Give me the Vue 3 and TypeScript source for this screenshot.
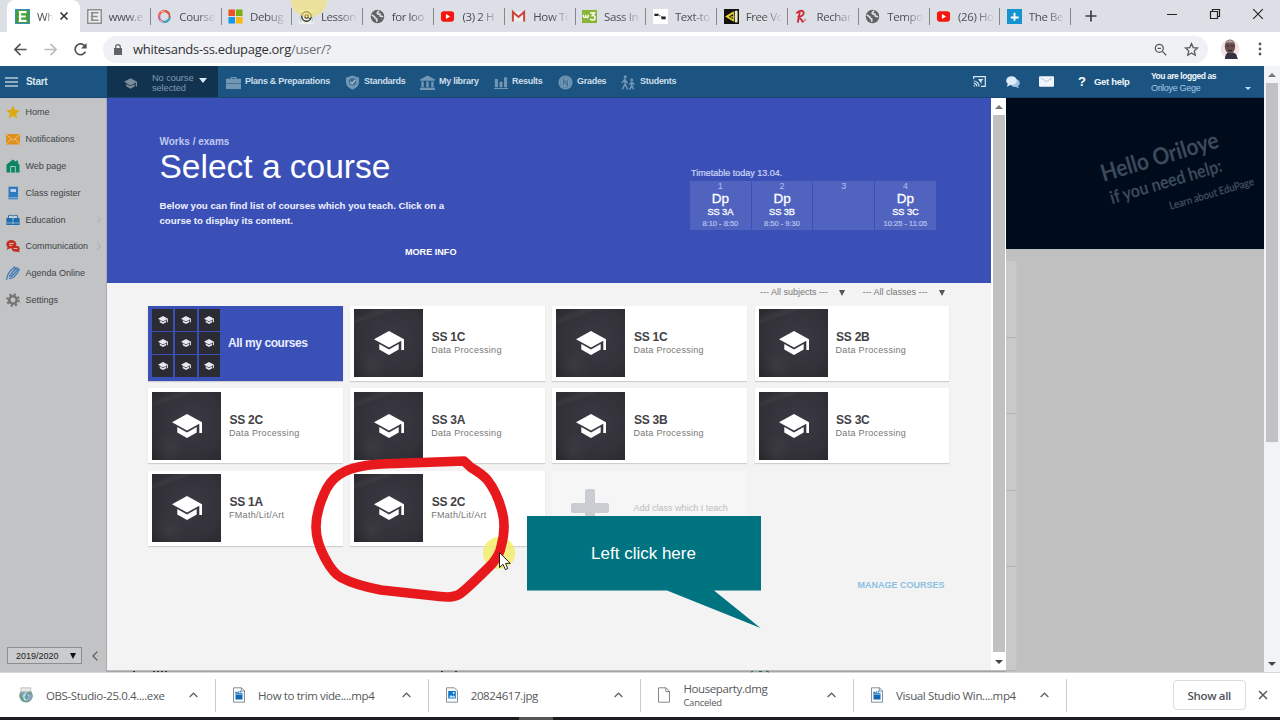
<script setup lang="ts">
interface Tab { icon: string; title: string; active?: boolean }
interface NavItem { icon: string; label: string; width: number; size: number }
interface SideItem { icon: string; label: string; more?: boolean }
interface Course { name: string; subject: string }
interface Lesson { nr: number; subject?: string; cls?: string; time?: string }
interface Download { icon: string; name: string; note?: string }

const tabs: Tab[] = [
  { icon: 'edu', title: 'Wh', active: true },
  { icon: 'edugrey', title: 'www.e' },
  { icon: 'ring', title: 'Course' },
  { icon: 'ms', title: 'Debug' },
  { icon: 'at', title: 'Lesson' },
  { icon: 'globe', title: 'for loo' },
  { icon: 'yt', title: '(3) 2 H' },
  { icon: 'gmail', title: 'How To' },
  { icon: 'w3', title: 'Sass In' },
  { icon: 'tts', title: 'Text-to' },
  { icon: 'free', title: 'Free Vo' },
  { icon: 'r', title: 'Rechar' },
  { icon: 'globe', title: 'Tempo' },
  { icon: 'yt', title: '(26) Ho' },
  { icon: 'plus', title: 'The Be' },
]

const nav: NavItem[] = [
  { icon: 'case', label: 'Plans & Preparations', width: 119, size: 15 },
  { icon: 'shield', label: 'Standards', width: 75, size: 15 },
  { icon: 'bank', label: 'My library', width: 74, size: 15 },
  { icon: 'bars', label: 'Results', width: 64, size: 14 },
  { icon: 'grade', label: 'Grades', width: 62, size: 15 },
  { icon: 'walk', label: 'Students', width: 70, size: 16 },
]

const side: SideItem[] = [
  { icon: 'star', label: 'Home' },
  { icon: 'envelope', label: 'Notifications' },
  { icon: 'house', label: 'Web page' },
  { icon: 'book', label: 'Class register' },
  { icon: 'edubook', label: 'Education', more: true },
  { icon: 'chat', label: 'Communication', more: true },
  { icon: 'pens', label: 'Agenda Online' },
  { icon: 'gear', label: 'Settings' },
]

const courses: Course[] = [
  { name: 'SS 1C', subject: 'Data Processing' },
  { name: 'SS 1C', subject: 'Data Processing' },
  { name: 'SS 2B', subject: 'Data Processing' },
  { name: 'SS 2C', subject: 'Data Processing' },
  { name: 'SS 3A', subject: 'Data Processing' },
  { name: 'SS 3B', subject: 'Data Processing' },
  { name: 'SS 3C', subject: 'Data Processing' },
  { name: 'SS 1A', subject: 'FMath/Lit/Art' },
  { name: 'SS 2C', subject: 'FMath/Lit/Art' },
]

const lessons: Lesson[] = [
  { nr: 1, subject: 'Dp', cls: 'SS 3A', time: '8:10 - 8:50' },
  { nr: 2, subject: 'Dp', cls: 'SS 3B', time: '8:50 - 9:30' },
  { nr: 3 },
  { nr: 4, subject: 'Dp', cls: 'SS 3C', time: '10:25 - 11:05' },
]

const downloads: Download[] = [
  { icon: 'disc', name: 'OBS-Studio-25.0.4....exe' },
  { icon: 'video', name: 'How to trim vide....mp4' },
  { icon: 'image', name: '20824617.jpg' },
  { icon: 'file', name: 'Houseparty.dmg', note: 'Canceled' },
  { icon: 'video', name: 'Visual Studio Win....mp4' },
]
</script>

<template>
  <div class="screen">
    <svg class="defs" width="0" height="0" aria-hidden="true">
      <symbol id="i-edu" viewBox="0 0 16 16"><rect width="16" height="16" fill="#3d8fb5" /><rect x="1.2" y="1.2" width="13.6" height="13.6" fill="#43a02f" /><path d="M4 3.3h8.3M4 8h7.6M4 12.6h8.3M5.4 3v10" stroke="#fff" stroke-width="2.3" fill="none" /></symbol>
      <symbol id="i-edugrey" viewBox="0 0 16 16"><rect x=".8" y=".8" width="14.4" height="14.4" fill="#eee" stroke="#8f9092" stroke-width="1.6" /><path d="M4 4h8.3M4 8h7.4M4 12h8.3M5.4 3.5v9" stroke="#8b8c8e" stroke-width="1.8" fill="none" /></symbol>
      <symbol id="i-ring" viewBox="0 0 16 16"><g fill="none" stroke-width="2.6"><path d="M8 2.2A5.8 5.8 0 0 1 13.6 9" stroke="#d9574c" /><path d="M13.6 9A5.8 5.8 0 0 1 6 13.4" stroke="#41a5b8" /><path d="M6 13.4A5.8 5.8 0 0 1 2.4 6.5" stroke="#c9619a" /><path d="M2.4 6.5A5.8 5.8 0 0 1 8 2.2" stroke="#ec6a4c" /></g><path d="M4 2l3 1M14 5l1 3M3 12l3 2" stroke="#fff" stroke-width=".7" /></symbol>
      <symbol id="i-ms" viewBox="0 0 16 16"><path d="M.5.5h7v7h-7z" fill="#f25022" /><path d="M8.5.5h7v7h-7z" fill="#7aae12" /><path d="M.5 8.5h7v7h-7z" fill="#1697e8" /><path d="M8.5 8.5h7v7h-7z" fill="#fcb50b" /></symbol>
      <symbol id="i-at" viewBox="0 0 16 16"><rect y="1" width="16" height="15" fill="#f1f4ee" opacity=".8" /><circle cx="8" cy="8" r="5" fill="none" stroke="#3a3320" stroke-width="1.5" /><circle cx="8" cy="8" r="1.8" fill="none" stroke="#3a3320" stroke-width="1.2" /><path d="M10 5.5v4q1 1.3 2.2.3" fill="none" stroke="#3a3320" /><path d="M2 3q-2 5 0 11M14 3q2 5 0 11" stroke="#8fcbd8" fill="none" /></symbol>
      <symbol id="i-globe" viewBox="0 0 16 16"><circle cx="8" cy="8" r="7.2" fill="#5f6368" /><path d="M1.8 6.2L5 8.4l.5 1.4 1.7.8v3M9.600 1.800L7.600 4.200l1.200 1.300h1.800l.4 2 3 .8" stroke="#dfe1e6" stroke-width="1.700" fill="none" /></symbol>
      <symbol id="i-yt" viewBox="0 0 16 16"><rect x="1" y="2.5" width="14" height="11" rx="3" fill="#f5170f" /><path d="M6.3 5.4v5.2L10.800 8z" fill="#fff" /></symbol>
      <symbol id="i-gmail" viewBox="0 0 16 16"><path d="M2.500 3h11v10h-11z" fill="#eceef0" /><path d="M2 13.300V3.200l6 5.200 6-5.200v10.100" fill="none" stroke="#cf4036" stroke-width="2.100" /></symbol>
      <symbol id="i-w3" viewBox="0 0 16 16"><rect y="1" width="16" height="14" fill="#8bb43a" /><path d="M1.500 6v1.500q0 1.500 1.300 1.500T4 7.500V6v1.500Q4 9 5.400 9t1.400-1.500V6M8.800 4.200h4.500l-2.200 2.700q2.900-.2 2.900 2.400t-2.800 2.500q-2 0-2.600-1.400" fill="none" stroke="#fff" stroke-width="1.500" /></symbol>
      <symbol id="i-tts" viewBox="0 0 16 16"><rect width="16" height="16" fill="#fff" /><path d="M1.500 5h4.200v2.500H1.500zM9 8h4.500v2.800H9z" fill="#222" /><path d="M5 5.500l5 3.500" stroke="#444" stroke-width="1.200" stroke-dasharray="1.2 1" /></symbol>
      <symbol id="i-free" viewBox="0 0 16 16"><rect width="16" height="16" fill="#111" /><path d="M1 8l9.500-5.500v11z" fill="#e5d32d" /><path d="M5 8.200l4.500-3v5.500z" fill="#111" /><path d="M7 8.400h4" stroke="#e5d32d" stroke-width="1.300" /><path d="M11.500 2.500q1-1 1.500-1t1.500 1v11q-1 1-1.500 1t-1.500-1z" fill="#eceac8" /></symbol>
      <symbol id="i-r" viewBox="0 0 16 16"><path d="M4 14.500L6.200 3.200M2.500 4.600Q6 1 9.200 2.200q2.300 2-.1 4.600Q7.800 8 5.200 8.300L10 14.300" fill="none" stroke="#cb2c3a" stroke-width="2" /><circle cx="11.600" cy="11.700" r="1.100" fill="none" stroke="#b88" /></symbol>
      <symbol id="i-plus" viewBox="0 0 16 16"><rect width="16" height="16" fill="#1593cf" /><path d="M4 9h8.500M8 4v8.500" stroke="#fff" stroke-width="2" /></symbol>

      <symbol id="i-cap" viewBox="0 0 30 24"><path d="M15 0L0 8.200l15 8.300 12.300-6.800V19H30V8.200zM5.300 13v5.400L15 24l9.700-5.600V13L15 18.500z" fill="currentColor" /></symbol>
      <symbol id="i-case" viewBox="0 0 16 16"><path d="M5 4V2h6v2h5v5H0V4zM6.500 4h3v-.8h-3zM0 9.700h16V15H0z" fill="currentColor" fill-rule="evenodd" /></symbol>
      <symbol id="i-shield" viewBox="0 0 16 16"><path d="M8 .5l7 2.300V8q-.6 5-7 7.800Q1.600 13 1 8V2.800z" fill="currentColor" /><circle cx="8" cy="7.300" r="4" fill="#3f6f97" /><path d="M5.500 7.300l2 2 3.500-4" fill="none" stroke="#a9bed1" stroke-width="1.400" /></symbol>
      <symbol id="i-bank" viewBox="0 0 16 16"><path d="M8 .5l8 4.200V6H0V4.700zM1.500 7h2.500v6H1.500zM6.700 7h2.600v6H6.700zM12 7h2.500v6H12zM0 13.700h16V16H0z" fill="currentColor" /></symbol>
      <symbol id="i-bars" viewBox="0 0 16 16"><path d="M1 4h3.500v9.500H1zM6.300 7h3.400v6.500H6.300zM11.500 2H15v11.500h-3.500zM0 14.300h16v1.200H0z" fill="currentColor" /></symbol>
      <symbol id="i-grade" viewBox="0 0 16 16"><circle cx="8" cy="8" r="7.500" fill="currentColor" /><circle cx="8" cy="8" r="5.700" fill="none" stroke="#4d7aa0" stroke-width=".7" /><path d="M6 11V5l4 6V5" fill="none" stroke="#3f6f99" stroke-width="1.200" /></symbol>
      <symbol id="i-walk" viewBox="0 0 16 16"><g fill="none" stroke="currentColor" stroke-width="1.600"><path d="M5 4.500v5L2 15.500M5 9.500l2.500 6M1.500 8.500L4.500 5l3 3.500M12 7.500v4l-2.500 4M12 11l2 4.500M9.500 10.500L12 7.500l3 3" /></g><circle cx="5" cy="2" r="1.700" fill="currentColor" /><circle cx="12" cy="5.200" r="1.500" fill="currentColor" /></symbol>

      <symbol id="i-star" viewBox="0 0 14 14"><path d="M7 .4l2 4.500 4.800.4-3.600 3.200 1.100 4.900L7 10.800l-4.300 2.600 1.100-4.900L.2 5.300 5 4.900z" fill="#dcaa0c" /></symbol>
      <symbol id="i-envelope" viewBox="0 0 14 14"><path d="M0 2h14v10.500H0z" fill="#de8f1e" /><path d="M.3 2.500L7 8.300l6.700-5.800M.3 12l4.900-5M13.700 12L8.800 7" fill="none" stroke="#eed0a0" stroke-width=".8" /></symbol>
      <symbol id="i-house" viewBox="0 0 14 14"><path d="M7 .5L.5 5.500v8h13v-8L12 4.300V1.500h-1.700v1.600z" fill="#0d8463" /><path d="M4.700 13.500V7.500h4.600v6" fill="none" stroke="#a9cfc1" /></symbol>
      <symbol id="i-book" viewBox="0 0 14 14"><path d="M2.500.7h9.500v12.600H2.500z" fill="#2f79bf" /><path d="M4.500 3h5.500v3H4.500z" fill="#b8d4ec" /><path d="M3 11.800h9" stroke="#a9c6df" stroke-width=".9" /></symbol>
      <symbol id="i-edubook" viewBox="0 0 14 14"><path d="M.4 5Q4 4 7 5.500 10 4 13.600 5v7H.4z" fill="#1f6cab" /><path d="M2.500 5V2.500Q5 1.700 7 3 9 1.700 11.500 2.500V5" fill="#c5d3de" stroke="#41739b" stroke-width="1" /><path d="M7 3.500v8M1 10h12" stroke="#b6cad9" stroke-width=".7" /></symbol>
      <symbol id="i-chat" viewBox="0 0 14 14"><ellipse cx="5.300" cy="5.300" rx="5" ry="4.300" fill="#c12f22" /><path d="M1.500 8L.7 11l3.500-2M12 9.500l1.700 4-4-1.500" fill="#c12f22" /><ellipse cx="9.800" cy="9.700" rx="4" ry="3" fill="#c12f22" /><path d="M3 4.500h4.700M3 6.300h3.500M7.500 9.500h4" stroke="#e4c1bd" stroke-width=".9" /></symbol>
      <symbol id="i-pens" viewBox="0 0 14 14"><path d="M1 12.500Q1 7 8.500 1l1 1.300Q6 6.500 3 11M3 12.700Q9 12.500 13.300 3.500L12 2.500Q10 7 4.500 11M1 12.500l-.7 1.300M5 8L11 1.500" fill="none" stroke="#3f78b5" stroke-width="1.200" /></symbol>
      <symbol id="i-gear" viewBox="0 0 14 14"><circle cx="7" cy="7" r="3.700" fill="none" stroke="#757575" stroke-width="2.500" /><circle cx="7" cy="7" r="5.700" fill="none" stroke="#757575" stroke-width="2.200" stroke-dasharray="2.240 2.240" /></symbol>

      <symbol id="i-disc" viewBox="0 0 16 16"><circle cx="8" cy="8.700" r="6.800" fill="#6b9c90" /><path d="M8 9L1.700 6.500q2-4 6-4zM8 9l6-2q1.500 4-2.300 7z" fill="#8d9fb8" /><path d="M2.800.8h10v4h-10z" fill="#e8eae8" stroke="#9a9" stroke-width=".6" /><path d="M8 4.800l3.500 4-2 4.700H6.300L4.500 9z" fill="#dceeea" opacity=".8" /><path d="M7.500 6.500h2.300v3h1.500L8.600 13 6 9.500h1.500z" fill="#5799b8" /></symbol>
      <symbol id="i-video" viewBox="0 0 16 16"><path d="M2.500.8h8l3 3v11.400h-11z" fill="#fafcfd" stroke="#849199" /><path d="M10.300.8v3.300h3.200" fill="none" stroke="#849199" /><path d="M4.500 6.200h7v6.300h-7z" fill="#1268b5" /><path d="M4.300 5.700l6.500-1.300" stroke="#1d6aa6" stroke-width="1.300" stroke-dasharray="1.500 .7" /><path d="M4.500 7.500h7" stroke="#9fd0ef" stroke-width=".7" /></symbol>
      <symbol id="i-image" viewBox="0 0 16 16"><path d="M2.500.8h8l3 3v11.400h-11z" fill="#fafcfd" stroke="#849199" /><path d="M4.200 4h7.600v7.500H4.200z" fill="#1275c9" /><path d="M5 10.500l2-2.500 1.500 1.500 1.300-1.200 1.500 2.200" fill="#d9effb" /><circle cx="9.600" cy="6" r=".9" fill="#fff" /></symbol>
      <symbol id="i-file" viewBox="0 0 16 16"><path d="M2.500.8h7.500l3.500 3.500v10.900h-11z" fill="#fdfdfd" stroke="#85888b" /><path d="M9.800.8v3.700h3.700" fill="none" stroke="#85888b" /></symbol>
      <symbol id="i-up" viewBox="0 0 10 6"><path d="M.7 5.300L5 1l4.300 4.300" fill="none" stroke="#5f6368" stroke-width="1.400" /></symbol>
    </svg>

    <div class="tabstrip">
      <div v-for="(t, i) in tabs" :key="i" class="tab" :class="{ active: t.active }">
        <svg class="favicon"><use :href="'#i-' + t.icon" /></svg>
        <span class="title">{{ t.title }}</span>
        <svg v-if="t.active" class="tabclose" viewBox="0 0 10 10"><path d="M1.500 1.500l7 7M8.500 1.500l-7 7" stroke="#333" stroke-width="1.600" /></svg>
      </div>
      <svg class="newtab" viewBox="0 0 12 12"><path d="M6 .5v11M.5 6h11" stroke="#3c4043" stroke-width="1.700" /></svg>
      <div class="winbtns">
        <svg viewBox="0 0 12 12"><path d="M1 6.500h10" stroke="#222" /></svg>
        <svg viewBox="0 0 12 12"><path d="M1.500 3.500h7v7h-7zM3.500 3.500v-2h7v7h-2" fill="none" stroke="#222" stroke-width="1.200" /></svg>
        <svg viewBox="0 0 12 12"><path d="M1.200 1.200l9.600 9.600M10.800 1.200L1.200 10.800" stroke="#222" stroke-width="1.100" /></svg>
      </div>
    </div>

    <div class="toolbar">
      <svg class="navbtn" viewBox="0 0 16 16"><path d="M14.500 8H2M8 2L2 8l6 6" fill="none" stroke="#4e5155" stroke-width="1.700" /></svg>
      <svg class="navbtn dim" viewBox="0 0 16 16"><path d="M1.500 8H14M8 2l6 6-6 6" fill="none" stroke="#b9bbbe" stroke-width="1.700" /></svg>
      <svg class="navbtn" viewBox="0 0 16 16"><path d="M13.300 10.300A5.800 5.800 0 1 1 13 4.700" fill="none" stroke="#4e5155" stroke-width="1.800" /><path d="M14.500 1v6h-6z" fill="#4e5155" /></svg>
      <div class="omnibox">
        <svg class="lock" viewBox="0 0 8 11"><path d="M0 4h8v7H0z" fill="#5f6368" /><path d="M1.700 4.500V3a2.300 2.300 0 0 1 4.600 0v1.500" fill="none" stroke="#5f6368" stroke-width="1.200" /></svg>
        <span class="url">whitesands-ss.edupage.org<em>/user/?</em></span>
        <svg class="oicon" viewBox="0 0 14 14"><circle cx="5.700" cy="5.700" r="4.300" fill="none" stroke="#55585c" stroke-width="1.400" /><path d="M9 9l4.200 4.200M3.800 5.700h3.800" stroke="#55585c" stroke-width="1.400" /></svg>
        <svg class="oicon star" viewBox="0 0 14 14"><path d="M7 1.500l1.600 3.700 4 .4-3 2.700.9 4L7 10.200l-3.500 2.100.9-4-3-2.700 4-.4z" fill="none" stroke="#55585c" stroke-width="1.200" /></svg>
      </div>
      <svg class="avatar" viewBox="0 0 20 20"><circle cx="10" cy="10" r="9.500" fill="#f3e2e6" /><path d="M5 20q0-5 3-6.500h5q4 1 4 4.500l1 2z" fill="#34323f" /><ellipse cx="10" cy="7.500" rx="5.200" ry="7" fill="#6a514f" /><path d="M6 3.500Q10-1.500 14 3.500z" fill="#b0aaa7" /><path d="M6.500 7h2.600M10.900 7h2.600M8 11.500h4" stroke="#2d2225" /></svg>
      <svg class="dots" viewBox="0 0 4 14"><g fill="#55585c"><circle cx="2" cy="2" r="1.400" /><circle cx="2" cy="7" r="1.400" /><circle cx="2" cy="12" r="1.400" /></g></svg>
    </div>

    <div class="page">
      <div class="app">
        <header class="topbar">
          <div class="start">
            <svg viewBox="0 0 13 10"><path d="M0 1h13M0 5h13M0 9h13" stroke="#b5cadb" stroke-width="1.500" /></svg>
            <b>Start</b>
          </div>
          <div class="picker">
            <svg class="pickcap"><use href="#i-cap" /></svg>
            <span>No course<br />selected</span>
            <svg class="caret" viewBox="0 0 8 5"><path d="M0 0h8L4 5z" fill="#dde8f2" /></svg>
          </div>
          <nav>
            <div v-for="n in nav" :key="n.label" class="navitem" :style="{ width: n.width + 'px' }">
              <svg :style="{ width: n.size + 'px' }"><use :href="'#i-' + n.icon" /></svg>
              <b>{{ n.label }}</b>
            </div>
          </nav>
          <div class="tools">
            <svg class="cast" viewBox="0 0 13 11"><path d="M.7 3V.7h11.600v9.600H8M.7 9.700a1 1 0 0 1 1 .8M.7 7.300a3.200 3.200 0 0 1 3.200 3.200M.7 5a5.500 5.500 0 0 1 5.500 5.500" fill="none" stroke="#dbe7f1" stroke-width="1.200" /><path d="M5 3h5.500l-2 2.300V8z" fill="#dbe7f1" /></svg>
            <svg class="talk" viewBox="0 0 14 12"><ellipse cx="9" cy="7" rx="4.800" ry="4" fill="#9fc4e0" /><path d="M11 9.500l2.500 2.500-4-1z" fill="#9fc4e0" /><ellipse cx="5.500" cy="4.700" rx="5.300" ry="4.400" fill="#dcebf7" /><path d="M2 7.500L.8 10.800 5 8.800z" fill="#dcebf7" /></svg>
            <svg class="mail" viewBox="0 0 15 11"><rect width="15" height="10.500" y=".3" rx="1" fill="#eff5fa" /><path d="M2 2l5.500 3.600L13 2" fill="none" stroke="#a9c0d3" stroke-width="1" /></svg>
            <strong class="q">?</strong><b class="help">Get help</b>
            <div class="user"><b>You are logged as</b><span>Oriloye Gege<i></i></span></div>
          </div>
        </header>

        <div class="main">
          <aside>
            <ul>
              <li v-for="s in side" :key="s.label">
                <svg><use :href="'#i-' + s.icon" /></svg><span>{{ s.label }}</span>
                <svg v-if="s.more" class="more" viewBox="0 0 4 7"><path d="M.5.5l3 3-3 3" fill="none" stroke="#a4a6a8" /></svg>
              </li>
            </ul>
            <div class="year">
              <div class="select"><span>2019/2020</span><svg viewBox="0 0 6 6"><path d="M0 0h6L3 6z" fill="#111" /></svg></div>
              <svg class="fold" viewBox="0 0 6 10"><path d="M5.300.7L1 5l4.300 4.300" fill="none" stroke="#555" stroke-width="1.200" /></svg>
            </div>
          </aside>

          <section class="dialog">
            <div class="content">
              <div class="banner">
                <div class="intro">
                  <div class="crumb">Works / exams</div>
                  <h1>Select a course</h1>
                  <p>Below you can find list of courses which you teach. Click on a<br />course to display its content.</p>
                  <a>MORE INFO</a>
                </div>
                <div class="timetable">
                  <div class="tt">Timetable today 13.04.</div>
                  <div class="cells">
                    <div v-for="l in lessons" :key="l.nr" class="cell">
                      <small>{{ l.nr }}</small>
                      <template v-if="l.subject"><span class="sub">{{ l.subject }}</span><span class="cls">{{ l.cls }}</span><span class="time">{{ l.time }}</span></template>
                    </div>
                  </div>
                </div>
              </div>
              <div class="filters">
                <span>--- All subjects ---</span><i></i><span class="second">--- All classes ---</span><i></i>
              </div>
              <div class="grid">
                <div class="card all">
                  <div class="mini"><div v-for="k in 9" :key="k"><svg><use href="#i-cap" /></svg></div></div>
                  <b>All my courses</b>
                </div>
                <div v-for="(c, i) in courses" :key="i" class="card">
                  <div class="board"><svg><use href="#i-cap" /></svg></div>
                  <div class="txt"><b>{{ c.name }}</b><span>{{ c.subject }}</span></div>
                </div>
                <div class="card add">
                  <svg viewBox="0 0 38 38"><g fill="#c9ccd1"><rect x="14" width="10" height="38" rx="2" /><rect y="14" width="38" height="10" rx="2" /></g></svg>
                  <span>Add class which I teach</span>
                </div>
              </div>
              <div class="manage">MANAGE COURSES</div>
            </div>
            <div class="scroll inner"><i class="up"></i><div class="thumb"></div><i class="down"></i></div>
          </section>

          <div class="behind">
            <div class="hero">
              <div class="hello"><span>Hello Oriloye</span><span>if you need help:</span><span>Learn about EduPage</span></div>
            </div>
            <div class="strip"><div></div><div></div><div></div><div></div><div></div></div>
          </div>
        </div>
      </div>
      <div class="scroll outer"><i class="up grey"></i><div class="thumb"></div><i class="down"></i></div>
    </div>

    <div class="shelf">
      <div v-for="d in downloads" :key="d.name" class="dl">
        <svg class="ficon"><use :href="'#i-' + d.icon" /></svg>
        <div class="fname"><span>{{ d.name }}</span><small v-if="d.note">{{ d.note }}</small></div>
        <svg class="chev"><use href="#i-up" /></svg>
      </div>
      <button>Show all</button>
      <svg class="x" viewBox="0 0 10 10"><path d="M1 1l8 8M9 1L1 9" stroke="#55585c" stroke-width="1.500" /></svg>
    </div>
    <div class="taskbar"><span></span></div>

    <svg class="marks" viewBox="0 0 1280 720">
      <circle cx="309" cy="-1" r="18.500" fill="#f6e36a" opacity=".6" />
      <circle cx="499" cy="553" r="16" fill="#f3ec62" opacity=".8" />
      <path d="M464 461L395 463.500Q376 464 366 465.500C343 469 331 477 324 494Q316 512 316 527C316 547 331 572 341 577.500Q355 585 381 590L440 596.500Q453 598 459 594.500C466 590 486 570 492 564Q500 554 501 547C506 529 504 518 502 511Q497 492 487 479.500Q482 474 471 467.500Z" fill="none" stroke="#e8191c" stroke-width="9.600" stroke-linejoin="round" />
      <path d="M527 516H761V590.500H714L760.500 628 667 590.500H527z" fill="#007380" />
      <path d="M499.500 552.500v15l3.500-3.200 2.400 5.300 2.400-1.100-2.300-5.100h4.700z" fill="#fff" stroke="#222" />
      <g fill="#333"><path d="M133 671h2v1h-2zM153 671h2v1h-2zM157 671h2v1h-2zM161 671h2v1h-2zM165 671h2v1h-2zM441 671h2v1h-2zM455 671h2v1h-2z" /></g>
      <path d="M751 672l2-1M759 671.500h3M766 671l3 1" stroke="#17695c" stroke-width="1" />
    </svg>
    <div class="bubble">Left click here</div>
  </div>
</template>

<style>
html, body { margin: 0; overflow: hidden; }
</style>

<style scoped>
* { box-sizing: border-box; }
svg { display: block; flex: none; overflow: visible; }
.screen { position: relative; width: 1280px; height: 720px; overflow: hidden; display: flex; flex-direction: column; font-family: "Liberation Sans", Arial, sans-serif; background: #fff; white-space: nowrap; }
.defs { position: absolute; }

.tabstrip { height: 32px; flex: none; background: #dddfe6; display: flex; align-items: center; font: 11.500px "Open Sans", "Noto Sans", sans-serif; color: #4a4d52; padding-left: 7px; }
.tab { width: 70.800px; height: 32px; flex: none; display: flex; align-items: center; padding-left: 6.500px; position: relative; }
.tab.active { width: 73px; background: #fff; border-radius: 8px 8px 0 0; padding-left: 8px; }
.tab:not(.active)::after { content: ""; position: absolute; right: 0; top: 8px; width: 1px; height: 17px; background: #85878b; }
.favicon { width: 15px; height: 15px; }
.title { margin-left: 7px; width: 40px; letter-spacing: -.4px; -webkit-mask-image: linear-gradient(90deg, #000 45%, #0000 92%); mask-image: linear-gradient(90deg, #000 45%, #0000 92%); }
.active .title { width: 18px; }
.tabclose { width: 10px; height: 10px; margin-left: 4px; }
.newtab { width: 12px; height: 12px; margin-left: 14px; }
.winbtns { margin-left: auto; display: flex; gap: 31px; padding: 0 16px 5px 0; }
.winbtns svg { width: 12px; height: 12px; }

.toolbar { height: 34px; flex: none; display: flex; align-items: center; padding-left: 13px; background: #fff; }
.navbtn { width: 15px; height: 15px; margin-right: 15px; }
.omnibox { height: 27px; width: 1105px; border-radius: 14px; background: #f0f1f4; display: flex; align-items: center; padding-left: 11px; }
.lock { width: 8px; height: 11px; }
.url { margin-left: 11px; font: 13px "Open Sans", "Noto Sans", sans-serif; letter-spacing: -.29px; color: #303236; flex: 1; }
.url em { font-style: normal; color: #6b6e73; }
.oicon { width: 13px; height: 13px; }
.star { margin: 0 9px 0 17px; width: 15px; height: 15px; }
.avatar { width: 20px; height: 20px; margin-left: 12px; }
.dots { width: 4px; height: 14px; margin-left: 18px; }

.page { height: 606px; flex: none; display: flex; }
.app { width: 1264px; display: flex; flex-direction: column; }
.topbar { height: 32px; flex: none; background: #1b5480; display: flex; border-bottom: 1px solid #174770; color: #d7e4ef; font-size: 9.500px; }
.start { width: 107px; display: flex; align-items: center; padding-left: 5px; gap: 8px; }
.start svg { width: 13px; height: 10px; }
.start b { font-size: 10px; letter-spacing: -.3px; }
.picker { width: 111px; background: #12334f; display: flex; align-items: center; padding-left: 17px; color: #7f99b0; line-height: 10px; }
.pickcap { width: 13px; height: 11px; color: #7e8d9b; margin-top: 3px; }
.picker span { margin-left: 15px; width: 42px; padding-top: 3px; font-size: 9.300px; letter-spacing: -.1px; }
.caret { width: 8px; height: 5px; margin-left: 5px; margin-bottom: 2px; }
nav { display: flex; padding-left: 8px; }
.navitem { display: flex; align-items: center; gap: 4px; }
.navitem svg { height: 15px; color: #7396b5; margin-top: 2px; }
.navitem b { font-size: 9px; letter-spacing: -.28px; color: #cfdeeb; margin-bottom: 1px; }
.tools { margin-left: auto; display: flex; align-items: center; }
.cast { width: 13px; height: 11px; }
.talk { width: 14px; height: 12px; margin-left: 20px; }
.mail { width: 15px; height: 11px; margin-left: 19px; }
.q { font-size: 13px; margin-left: 24px; color: #fff; }
.help { margin-left: 8px; font-size: 9.500px; letter-spacing: -.3px; width: 37px; color: #eff5fa; }
.user { margin-left: 20px; width: 113px; line-height: 12px; font-size: 9px; margin-top: 0; }
.user b { display: block; font-size: 8.500px; letter-spacing: -.45px; color: #f0f6fb; }
.user span { color: #a5c9ea; display: block; position: relative; letter-spacing: -.3px; }
.user i { position: absolute; right: 13px; top: 5px; border: 3px solid transparent; border-top-color: #cfe0ef; border-bottom: 0; }

.main { flex: 1; display: flex; min-height: 0; }
aside { width: 107px; background: #c1c3c4; border-right: 1px solid #a8aaac; display: flex; flex-direction: column; justify-content: space-between; font-size: 9px; color: #3e4247; }
ul { margin: 0; padding: 1px 0 0; list-style: none; }
li { height: 26.800px; display: flex; align-items: center; padding-left: 5.500px; }
li svg { width: 14px; height: 14px; }
li span { margin-left: 6px; }
li .more { width: 4px; height: 7px; margin: 0 5px 0 auto; }
.year { display: flex; align-items: center; padding: 0 0 8px 7px; }
.select { width: 75px; height: 17px; border: 1px solid #8b8d8f; display: flex; align-items: center; padding-left: 8px; color: #222; background: #c9cbcc; }
.select svg { width: 6px; height: 6px; margin-left: 12px; }
.select span { width: 42px; }
.fold { width: 6px; height: 10px; margin-left: 10px; }

.dialog { width: 899px; height: 573px; background: #f3f3f3; display: flex; border-bottom: 1px solid #bbb; box-shadow: 0 1px 0 #a5a5a5; }
.content { width: 884px; }
.banner { height: 185px; background: #3b50b7; color: #fff; display: flex; justify-content: space-between; padding: 37px 55px 0 52.500px; }
.intro { width: 297px; }
.crumb { font-size: 10px; font-weight: bold; color: #bfcaf2; line-height: 14px; }
h1 { margin: 0; font-size: 33.500px; font-weight: normal; line-height: 36px; }
p { margin: 13px 0 0; font-size: 9.700px; font-weight: bold; line-height: 15px; letter-spacing: -.02px; color: #eef1fd; }
.intro a { display: block; text-align: right; font-size: 9.100px; font-weight: bold; margin-top: 18px; line-height: 12px; }
.timetable { width: 246px; padding-top: 33px; }
.tt { font-size: 9px; line-height: 11px; color: #cdd5f6; padding-left: 1px; margin-bottom: 2px; -webkit-text-stroke: .2px #cdd5f6; }
.cells { display: flex; gap: 1px; }
.cell { width: 60.700px; height: 49px; background: #5064bf; display: flex; flex-direction: column; align-items: center; }
.cell small { font-size: 9px; line-height: 10px; color: #b3bfee; }
.sub { font-size: 13.500px; line-height: 16px; -webkit-text-stroke: .3px #fff; }
.cls { font-size: 9.300px; line-height: 11px; -webkit-text-stroke: .3px #fff; letter-spacing: -.1px; }
.time { font-size: 7.500px; line-height: 10px; margin-top: 1px; color: #b7c2ef; -webkit-text-stroke: .2px #b7c2ef; }
.filters { height: 22.600px; display: flex; justify-content: flex-end; padding-right: 46.500px; font-size: 9px; color: #777; line-height: 19px; }
.filters i { border: 3px solid transparent; border-top: 6px solid #555; border-bottom: 0; height: 0; margin: 7px 0 0 11px; }
.filters .second { margin-left: 17.500px; }
.grid { padding-left: 41px; width: 842.500px; display: grid; grid-template-columns: repeat(4, 194.800px); column-gap: 7.400px; row-gap: 7.600px; }
.card { height: 75px; background: #fff; box-shadow: 0 1px 1px #cfcfcf; display: flex; align-items: center; padding-left: 4px; }
.all { background: #3b50b7; color: #e9edff; font-size: 12px; letter-spacing: -.42px; }
.all b { margin-left: 8px; }
.mini { width: 68px; height: 68px; display: grid; grid-template-columns: repeat(3, 1fr); gap: 1px 2px; }
.mini div { background: #2b2b33; display: flex; align-items: center; justify-content: center; color: #e8e8ee; }
.mini svg { width: 10px; height: 8px; }
.board { width: 69px; height: 68px; display: flex; align-items: center; justify-content: center; color: #fff; background: linear-gradient(160deg, transparent 8%, #ffffff0a 14%, transparent 18%), radial-gradient(ellipse at 25% 85%, #ffffff0b, transparent 22%), radial-gradient(circle at 55% 45%, #3b3943, #323138 65%, #28272c); }
.board svg { width: 30px; height: 24px; margin-left: 1px; }
.txt { margin-left: 8px; display: flex; flex-direction: column; margin-top: 1px; }
.txt b { font-size: 12px; line-height: 13px; letter-spacing: -.25px; color: #424246; padding-left: .5px; }
.txt span { font-size: 9px; line-height: 12px; letter-spacing: .3px; color: #777; }
.add { background: #f6f6f6; box-shadow: 0 1px 1px #ececec; font-size: 9px; color: #bcbcc0; letter-spacing: .02px; }
.add svg { width: 38px; height: 38px; margin: 0 0 1px 15px; }
.add span { margin-left: 24px; }
.manage { margin: 33px 46.500px 0 0; text-align: right; font-size: 9px; font-weight: bold; line-height: 12px; color: #8dbfe2; }

.scroll { display: flex; flex-direction: column; align-items: center; background: #f2f3f4; }
.inner { width: 15px; background: #fff; }
.inner .thumb { width: 12px; height: 537px; background: #c1c1c2; margin-top: 6px; }
.scroll i { border: 4px solid transparent; height: 0; flex: none; }
.up { border-bottom: 4px solid #777 !important; border-top: 0 !important; margin-top: 7px; }
.down { border-top: 4px solid #444 !important; border-bottom: 0 !important; margin-top: 8px; }
.outer { width: 16px; }
.outer .thumb { width: 12px; height: 359px; background: #c1c1c3; margin-top: 6px; }
.outer .down { margin-top: auto; margin-bottom: 6px; }

.behind { width: 258px; background: #c0c0c0; }
.hero { height: 151px; background: #000c1c; position: relative; }
.hello { position: absolute; left: 95px; top: 62px; display: flex; flex-direction: column; align-items: flex-start; color: #3c4a5b; font-family: Lato, sans-serif; font-weight: 700; transform: rotate(-16.500deg) scaleX(.88); transform-origin: 0 13px; }
.hello span { line-height: 26px; font-size: 23.500px; }
.hello span + span { font-size: 18px; padding-left: 2px; }
.hello span:last-child { font-size: 11px; padding-left: 64px; line-height: 24px; letter-spacing: -.2px; }
.strip { width: 11px; margin-top: 12px; }
.strip div { height: 76.500px; background: #c9c9c9; border-bottom: 1px solid #b5b5b5; border-right: 1px solid #c4c4c4; }
.strip div:last-child { height: 104px; }

.shelf { height: 45px; flex: none; background: #fff; border-top: 1px solid #d5d5d5; display: flex; align-items: center; font-family: "Open Sans", "Noto Sans", sans-serif; color: #55585c; }
.dl { width: 212.700px; height: 33px; border-right: 1px solid #ccc; display: flex; align-items: center; padding-left: 15px; }
.dl:first-child { width: 216px; padding-left: 18px; }
.ficon { width: 16px; height: 16px; margin-bottom: 1px; }
.fname { margin-left: 11px; flex: 1; display: flex; flex-direction: column; font-size: 11.500px; letter-spacing: -.38px; line-height: 14px; padding-top: 1px; }
.dl:first-child .fname { margin-left: 12px; }
.fname small { font-size: 9.500px; line-height: 13px; letter-spacing: -.25px; }
.chev { width: 9px; height: 6px; margin-right: 17px; }
button { margin-left: 106px; width: 73px; height: 30px; border: 1px solid #dadce0; border-radius: 4px; background: #fff; padding: 0; font: 600 11.500px "Open Sans", sans-serif; letter-spacing: -.35px; color: #505357; }
.x { width: 10px; height: 10px; margin-left: 12px; }
.taskbar { height: 3px; background: #1d1a20; flex: none; }
.taskbar span { display: block; width: 34px; height: 3px; margin-left: 519px; background: #555; }

.marks { position: absolute; left: 0; top: 0; width: 1280px; height: 720px; }
.bubble { position: absolute; left: 527px; top: 516px; width: 233px; height: 75px; display: flex; align-items: center; justify-content: center; color: #fff; font-size: 17px; }
</style>
